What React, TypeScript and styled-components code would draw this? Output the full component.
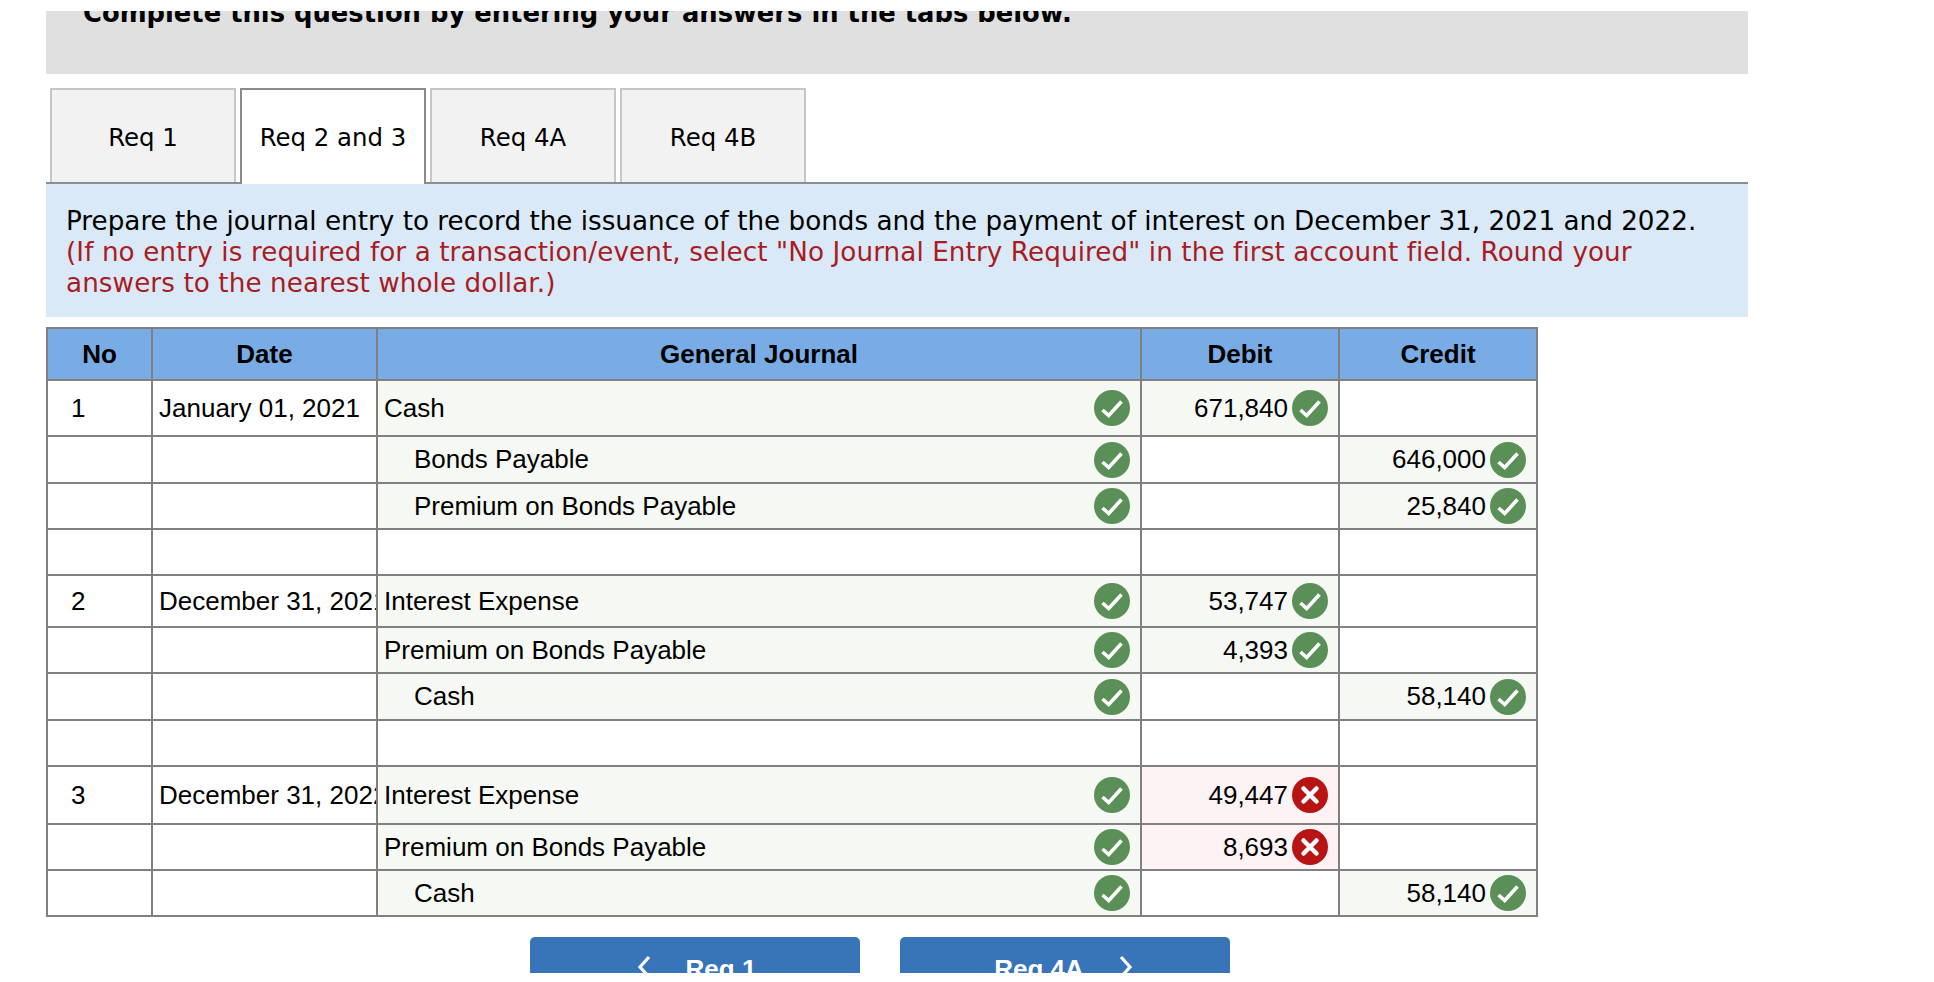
import React from "react";
import styled, { createGlobalStyle } from "styled-components";

const GlobalStyle = createGlobalStyle`
  html, body {
    margin: 0;
    padding: 0;
    background: #fff;
  }
`;

type Row = {
  no?: string;
  date?: string;
  account?: string;
  indent?: boolean;
  debit?: string;
  credit?: string;
  wrong?: boolean;
  height: number;
};

const rows: Row[] = [
  { no: "1", date: "January 01, 2021", account: "Cash", debit: "671,840", height: 56 },
  { account: "Bonds Payable", indent: true, credit: "646,000", height: 47 },
  { account: "Premium on Bonds Payable", indent: true, credit: "25,840", height: 46 },
  { height: 46 },
  { no: "2", date: "December 31, 2021", account: "Interest Expense", debit: "53,747", height: 52 },
  { account: "Premium on Bonds Payable", debit: "4,393", height: 46 },
  { account: "Cash", indent: true, credit: "58,140", height: 47 },
  { height: 46 },
  { no: "3", date: "December 31, 2022", account: "Interest Expense", debit: "49,447", wrong: true, height: 58 },
  { account: "Premium on Bonds Payable", debit: "8,693", wrong: true, height: 46 },
  { account: "Cash", indent: true, credit: "58,140", height: 46 },
];

const tabs = ["Req 1", "Req 2 and 3", "Req 4A", "Req 4B"];

const Check = () => (
  <svg width="36" height="36" viewBox="0 0 36 36">
    <circle cx="18" cy="18" r="18" fill="#5b8f58" />
    <polyline points="8.5,20 14.7,25.5 27.5,11.5" fill="none" stroke="#fff" strokeWidth="3.6" />
  </svg>
);

const Cross = () => (
  <svg width="36" height="36" viewBox="0 0 36 36">
    <circle cx="18" cy="18" r="18" fill="#b81414" />
    <path d="M11.5 11.5 L24.5 24.5 M24.5 11.5 L11.5 24.5" fill="none" stroke="#fff" strokeWidth="4.5" strokeLinecap="round" />
  </svg>
);

const Amount = ({ value, wrong }: { value?: string; wrong?: boolean }) => {
  if (!value) return <Cell />;
  return (
    <Cell $tint={wrong ? "#fdf3f4" : "#f6f8f4"}>
      <CellInner>
        {value}
        {wrong ? <Cross /> : <Check />}
      </CellInner>
    </Cell>
  );
};

export default function App() {
  return (
    <>
      <GlobalStyle />
      <Frame>
        <Notice>
          <NoticeText>Complete this question by entering your answers in the tabs below.</NoticeText>
        </Notice>
        <TabBar>
          {tabs.map((tab, idx) => (
            <Tab key={tab} $active={idx === 1}>
              {tab}
            </Tab>
          ))}
        </TabBar>
        <Instructions>
          Prepare the journal entry to record the issuance of the bonds and the payment of interest on December 31, 2021 and 2022.
          <Warning>
            (If no entry is required for a transaction/event, select "No Journal Entry Required" in the first account field. Round your answers to the nearest whole dollar.)
          </Warning>
        </Instructions>
        <Journal>
          <colgroup>
            <col style={{ width: 105 }} />
            <col style={{ width: 225 }} />
            <col style={{ width: 764 }} />
            <col style={{ width: 198 }} />
            <col style={{ width: 198 }} />
          </colgroup>
          <thead>
            <tr>
              <HeadCell>No</HeadCell>
              <HeadCell>Date</HeadCell>
              <HeadCell>General Journal</HeadCell>
              <HeadCell>Debit</HeadCell>
              <HeadCell>Credit</HeadCell>
            </tr>
          </thead>
          <tbody>
            {rows.map((row, idx) => (
              <JournalRow key={idx} $height={row.height}>
                <NoCell>{row.no}</NoCell>
                <Cell>
                  <DateText>{row.date}</DateText>
                </Cell>
                {row.account ? (
                  <Cell $tint="#f6f8f4">
                    <AccountInner $indent={row.indent}>
                      {row.account}
                      <Check />
                    </AccountInner>
                  </Cell>
                ) : (
                  <Cell />
                )}
                <Amount value={row.debit} wrong={row.wrong} />
                <Amount value={row.credit} />
              </JournalRow>
            ))}
          </tbody>
        </Journal>
        <NavRow>
          <NavButton $back>
            <svg width="14" height="28" viewBox="0 0 14 28">
              <polyline points="12,2 3,12 12,22" fill="none" stroke="#fff" strokeWidth="3.2" />
            </svg>
            Req 1
          </NavButton>
          <NavButton>
            Req 4A
            <svg width="14" height="28" viewBox="0 0 14 28">
              <polyline points="2,2 11,12 2,22" fill="none" stroke="#fff" strokeWidth="3.2" />
            </svg>
          </NavButton>
        </NavRow>
      </Frame>
    </>
  );
}

const Frame = styled.div`
  box-sizing: border-box;
  width: 1702px;
  height: 962px;
  margin: 11px 0 0 46px;
  overflow: hidden;
`;

const Notice = styled.div`
  height: 63px;
  background: #e0e0e0;
  overflow: hidden;
`;

const NoticeText = styled.div`
  margin: -13px 0 0 37px;
  font: bold 25.8px/30px "DejaVu Sans", sans-serif;
  color: #000;
  white-space: nowrap;
`;

const TabBar = styled.div`
  display: flex;
  gap: 4px;
  height: 96px;
  margin-top: 14px;
  padding-left: 4px;
  box-sizing: border-box;
  border-bottom: 2px solid #8a8f94;
`;

const Tab = styled.div<{ $active?: boolean }>`
  box-sizing: border-box;
  width: 186px;
  height: ${({ $active }) => ($active ? "96px" : "94px")};
  display: flex;
  align-items: center;
  justify-content: center;
  padding-top: ${({ $active }) => ($active ? "0" : "2px")};
  background: ${({ $active }) => ($active ? "#fff" : "#f2f2f2")};
  border: 2px solid ${({ $active }) => ($active ? "#8a8a8a" : "#c6c6c6")};
  border-bottom: 0;
  font: 24.4px "DejaVu Sans", sans-serif;
  color: #000;
`;

const Instructions = styled.div`
  box-sizing: border-box;
  height: 133px;
  padding: 22px 20px 0;
  background: #d9e9f8;
  font: 26.22px/31px "DejaVu Sans", sans-serif;
  color: #000;
`;

const Warning = styled.div`
  color: #a81c22;
  letter-spacing: 0.09px;
`;

const Journal = styled.table`
  width: 1490px;
  margin: 10px 0 0;
  table-layout: fixed;
  border-collapse: collapse;
  font: 26px "Liberation Sans", Arial, sans-serif;
  color: #000;
`;

const HeadCell = styled.th`
  height: 50px;
  padding: 0;
  background: #79ace5;
  border: 2px solid #808080;
  font-weight: bold;
  text-align: center;
`;

const JournalRow = styled.tr<{ $height: number }>`
  height: ${({ $height }) => $height}px;
`;

const Cell = styled.td<{ $tint?: string }>`
  padding: 0;
  background: ${({ $tint }) => $tint || "#fff"};
  border: 2px solid #808080;
  overflow: hidden;
`;

const NoCell = styled(Cell)`
  padding-left: 23px;
`;

const DateText = styled.div`
  padding-left: 6px;
  white-space: nowrap;
  overflow: hidden;
`;

const AccountInner = styled.div<{ $indent?: boolean }>`
  display: flex;
  align-items: center;
  justify-content: space-between;
  padding: 0 10px 0 ${({ $indent }) => ($indent ? "36px" : "6px")};
`;

const CellInner = styled.div`
  display: flex;
  align-items: center;
  justify-content: flex-end;
  gap: 4px;
  padding-right: 10px;
`;

const NavRow = styled.div`
  display: flex;
  gap: 40px;
  margin: 20px 0 0 484px;
`;

const NavButton = styled.div<{ $back?: boolean }>`
  display: flex;
  align-items: center;
  justify-content: center;
  gap: 35px;
  box-sizing: border-box;
  width: 330px;
  height: 64px;
  padding: ${({ $back }) => ($back ? "0 0 0 3px" : "0 3px 0 0")};
  background: #3874b8;
  border-radius: 5px;
  font: bold 26px "Liberation Sans", Arial, sans-serif;
  color: #fff;
`;
